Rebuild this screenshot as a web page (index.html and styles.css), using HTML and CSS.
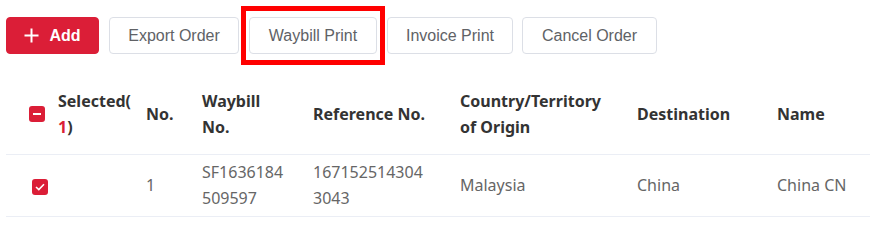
FILE: index.html
```html
<!DOCTYPE html>
<html lang="en">
<head>
    <meta charset="UTF-8">
    <title>Orders</title>
    <link rel="stylesheet" href="styles.css">
</head>
<body>

    <!-- Toolbar -->
    <div class="toolbar">
        <button class="btn btn-primary">
            <svg class="plus" width="15" height="15" viewBox="0 0 15 15"><path d="M7.5 0.5v14M0.5 7.5h14" stroke="#fff" stroke-width="2" fill="none"/></svg>
            Add
        </button>
        <button class="btn btn-export">Export Order</button>
        <span class="highlight"><button class="btn btn-waybill">Waybill Print</button></span>
        <button class="btn btn-invoice">Invoice Print</button>
        <button class="btn btn-cancel">Cancel Order</button>
    </div>

    <!-- Order table -->
    <table class="orders">
        <colgroup>
            <col style="width:132px">
            <col style="width:56px">
            <col style="width:111px">
            <col style="width:147px">
            <col style="width:177px">
            <col style="width:140px">
            <col style="width:101px">
        </colgroup>
        <thead>
            <tr>
                <th>
                    <div class="select-head">
                        <span class="check check-partial"><i></i></span>
                        <span class="select-label"><span class="nw">Selected(</span><wbr><span class="nw"><em>1</em>)</span></span>
                    </div>
                </th>
                <th>No.</th>
                <th class="narrow">Waybill No.</th>
                <th>Reference No.</th>
                <th class="country">Country/Territory of Origin</th>
                <th>Destination</th>
                <th>Name</th>
            </tr>
        </thead>
        <tbody>
            <tr>
                <td class="check-cell">
                    <span class="check">
                        <svg width="10" height="8" viewBox="0 0 10 8"><path d="M1 4l2.8 2.6L9 1.3" stroke="#fff" stroke-width="1.6" fill="none"/></svg>
                    </span>
                </td>
                <td>1</td>
                <td class="narrow wrap">SF1636184509597</td>
                <td class="ref wrap">1671525143043043</td>
                <td>Malaysia</td>
                <td>China</td>
                <td>China CN</td>
            </tr>
        </tbody>
    </table>

</body>
</html>
```

FILE: styles.css
```css
* {
    margin: 0;
    padding: 0;
    box-sizing: border-box;
}

body {
    background: #fff;
    padding: 17px 0 0 6px;
    width: 870px;
}

.toolbar {
    display: flex;
    align-items: center;
    gap: 10px;
}

.btn {
    height: 37px;
    padding: 0;
    border: 1px solid #dcdfe6;
    border-radius: 4px;
    background: #fff;
    color: #606266;
    font-family: "Liberation Sans", Arial, sans-serif;
    font-size: 16px;
    display: inline-flex;
    align-items: center;
    justify-content: center;
    gap: 10px;
    cursor: pointer;
}

.btn-primary {
    background: #db1e37;
    border-color: #db1e37;
    color: #fff;
    font-weight: bold;
    width: 93px;
}

.btn-export { width: 130px; }
.btn-waybill { width: 128px; }
.btn-invoice { width: 126px; }
.btn-cancel { width: 135px; margin-left: -1px; }

.highlight {
    position: relative;
    display: inline-flex;
}

.highlight::after {
    content: "";
    position: absolute;
    left: -8px;
    right: -8px;
    top: -11px;
    bottom: -11px;
    border: 5px solid #f00;
}

/* Table */
.orders {
    margin-top: 20px;
    width: 864px;
    table-layout: fixed;
    border-collapse: collapse;
    font-family: "Noto Sans", "Open Sans", sans-serif;
    font-size: 16px;
    line-height: 26px;
}

.orders th {
    height: 80px;
    padding: 0 8px;
    text-align: left;
    vertical-align: middle;
    font-weight: bold;
    color: #333;
    border-bottom: 1px solid #ebeef5;
}

.orders td {
    height: 62px;
    padding: 0 8px;
    vertical-align: middle;
    color: #666;
    border-bottom: 1px solid #ebeef5;
}

.orders th:first-child {
    padding-left: 23px;
}

.orders td.check-cell {
    padding-left: 26px;
}

.select-head {
    display: flex;
    align-items: center;
    gap: 13px;
}

.select-label {
    width: 80px;
}

.nw {
    white-space: nowrap;
}

.select-label em {
    font-style: normal;
    color: #db1e37;
}

.narrow {
    padding-right: 17px !important;
}

.wrap {
    word-break: break-all;
}

.ref {
    padding-right: 22px !important;
}

.country {
    padding-right: 9px !important;
}

.check {
    width: 16px;
    height: 16px;
    border-radius: 3px;
    background: #db1e37;
    display: inline-flex;
    align-items: center;
    justify-content: center;
    flex-shrink: 0;
    vertical-align: middle;
}

.check-partial i {
    width: 8px;
    height: 2px;
    background: #fff;
}
```
